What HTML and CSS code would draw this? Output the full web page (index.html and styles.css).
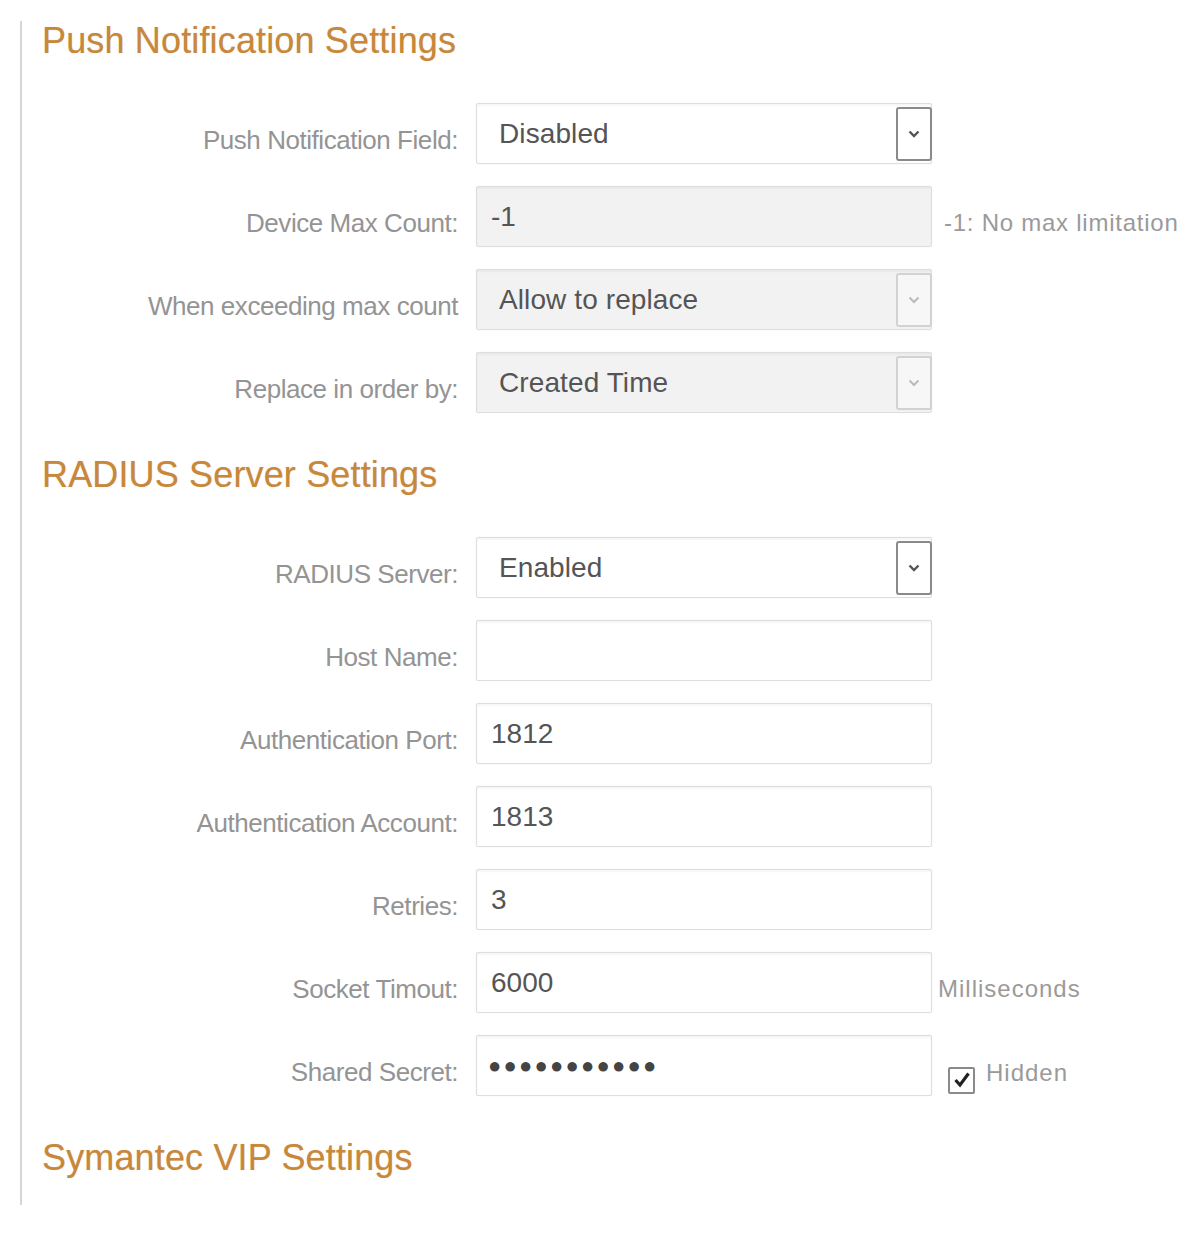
FILE: index.html
```html
<!DOCTYPE html>
<html>
<head>
<meta charset="utf-8">
<link rel="stylesheet" href="styles.css">
</head>
<body>
<div class="panel">
  <h2 class="heading">Push Notification Settings</h2>
  <div class="form">
    <div class="row">
      <div class="label">Push Notification Field:</div>
      <div class="select"><span class="value">Disabled</span><span class="arrow"><svg width="12" height="8" viewBox="0 0 12 8"><path d="M1.5 1.5 L6 6 L10.5 1.5" fill="none" stroke="#555" stroke-width="2.4"/></svg></span></div>
      <div class="extra"></div>
    </div>
    <div class="row">
      <div class="label">Device Max Count:</div>
      <div class="input disabled"><span class="value">-1</span></div>
      <div class="extra hint limit">-1: No max limitation</div>
    </div>
    <div class="row">
      <div class="label">When exceeding max count</div>
      <div class="select disabled"><span class="value">Allow to replace</span><span class="arrow"><svg width="12" height="8" viewBox="0 0 12 8"><path d="M1.5 1.5 L6 6 L10.5 1.5" fill="none" stroke="#bbb" stroke-width="2"/></svg></span></div>
      <div class="extra"></div>
    </div>
    <div class="row">
      <div class="label">Replace in order by:</div>
      <div class="select disabled"><span class="value">Created Time</span><span class="arrow"><svg width="12" height="8" viewBox="0 0 12 8"><path d="M1.5 1.5 L6 6 L10.5 1.5" fill="none" stroke="#bbb" stroke-width="2"/></svg></span></div>
      <div class="extra"></div>
    </div>
  </div>

  <h2 class="heading">RADIUS Server Settings</h2>
  <div class="form">
    <div class="row">
      <div class="label">RADIUS Server:</div>
      <div class="select"><span class="value">Enabled</span><span class="arrow"><svg width="12" height="8" viewBox="0 0 12 8"><path d="M1.5 1.5 L6 6 L10.5 1.5" fill="none" stroke="#555" stroke-width="2.4"/></svg></span></div>
      <div class="extra"></div>
    </div>
    <div class="row">
      <div class="label">Host Name:</div>
      <div class="input"><span class="value"></span></div>
      <div class="extra"></div>
    </div>
    <div class="row">
      <div class="label">Authentication Port:</div>
      <div class="input"><span class="value">1812</span></div>
      <div class="extra"></div>
    </div>
    <div class="row">
      <div class="label">Authentication Account:</div>
      <div class="input"><span class="value">1813</span></div>
      <div class="extra"></div>
    </div>
    <div class="row">
      <div class="label">Retries:</div>
      <div class="input"><span class="value">3</span></div>
      <div class="extra"></div>
    </div>
    <div class="row">
      <div class="label">Socket Timout:</div>
      <div class="input"><span class="value">6000</span></div>
      <div class="extra hint ms">Milliseconds</div>
    </div>
    <div class="row">
      <div class="label">Shared Secret:</div>
      <div class="input"><span class="value dots">●●●●●●●●●●●</span></div>
      <div class="extra check">
        <span class="box"><svg width="22" height="22" viewBox="0 0 22 22"><path d="M4.5 11 L9 16 L17.5 4.5" fill="none" stroke="#222" stroke-width="3.2"/></svg></span>
        <span class="hint hidden-label">Hidden</span>
      </div>
    </div>
  </div>

  <h2 class="heading">Symantec VIP Settings</h2>
</div>
</body>
</html>
```

FILE: styles.css
```css
html, body {
  margin: 0;
  padding: 0;
  background: #ffffff;
}

body {
  font-family: "Liberation Sans", Arial, sans-serif;
}

.panel {
  margin: 21px 0 0 20px;
  border-left: 2px solid #d6d6d6;
  padding: 0 0 27px 20px;
}

.heading {
  margin: 0;
  font-size: 36px;
  line-height: 40px;
  font-weight: normal;
  letter-spacing: 0.15px;
  color: #c9873a;
  text-shadow: 0 0 1px rgba(150, 100, 40, 0.35);
}

.form {
  display: flex;
  flex-direction: column;
  gap: 22px;
  margin: 42px 0;
}

.row {
  display: grid;
  grid-template-columns: 416px 456px 1fr;
  column-gap: 18px;
  height: 61px;
  align-items: center;
}

.label {
  text-align: right;
  font-size: 26px;
  color: #949494;
  white-space: nowrap;
  padding-top: 13px;
  letter-spacing: -0.45px;
}

.input, .select {
  box-sizing: border-box;
  height: 61px;
  border: 1px solid #dedede;
  border-radius: 2px;
  background: #ffffff;
  box-shadow: inset 0 2px 2px rgba(0, 0, 0, 0.04), 0 0 2px rgba(0, 0, 0, 0.06);
  display: flex;
  align-items: center;
  font-size: 28px;
  color: #555555;
}

.input .value {
  padding-left: 14px;
}

.select .value {
  padding-left: 22px;
  flex: 1;
  letter-spacing: 0.1px;
}

.input.disabled, .select.disabled {
  background: #f2f2f2;
}

.arrow {
  box-sizing: border-box;
  width: 36px;
  height: 54px;
  margin-right: -1px;
  border: 2px solid #8a8a8a;
  border-radius: 3px;
  background: #ffffff;
  display: flex;
  align-items: center;
  justify-content: center;
}

.select.disabled .arrow {
  border-color: #d2d2d2;
  background: #f7f7f7;
}

.input .dots {
  font-size: 22px;
  letter-spacing: 2.2px;
  color: #444;
  padding-left: 11px;
}

.extra {
  margin-left: -6px;
  padding-top: 12px;
}

.hint {
  font-size: 24px;
  color: #9a9a9a;
  white-space: nowrap;
}

.limit {
  letter-spacing: 0.75px;
}

.ms {
  margin-left: -12px;
  letter-spacing: 1px;
}

.check {
  display: flex;
  align-items: flex-start;
  gap: 11px;
  margin-left: -2px;
  padding-top: 20px;
}

.hidden-label {
  letter-spacing: 1px;
  margin-top: 1px;
}

.box {
  box-sizing: border-box;
  width: 27px;
  height: 27px;
  border: 2px solid #8a8a8a;
  border-radius: 2px;
  margin-top: 9px;
  display: flex;
  align-items: center;
  justify-content: center;
}

.box svg {
  display: block;
}
```
